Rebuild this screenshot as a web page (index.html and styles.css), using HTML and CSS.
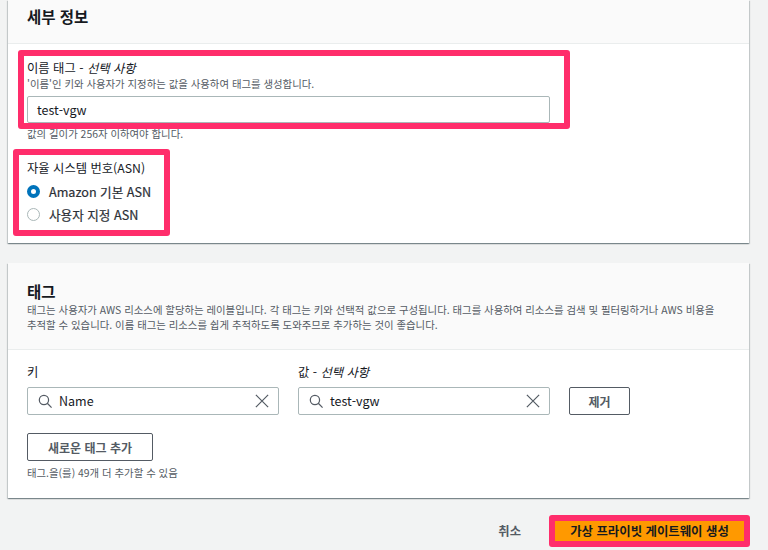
FILE: index.html
```html
<!DOCTYPE html>
<html lang="ko">
<head>
<meta charset="utf-8">
<title>가상 프라이빗 게이트웨이 생성</title>
<link rel="stylesheet" href="styles.css">
</head>
<body>
<main class="page">
  <section class="card first">
    <header class="card-head first-head"><h2 class="title">세부 정보</h2></header>
    <div class="card-body details">
      <div class="mark mark-name"></div>
      <div class="mark mark-asn"></div>
      <div class="field-label">이름 태그 - <i>선택 사항</i></div>
      <div class="hint">'이름'인 키와 사용자가 지정하는 값을 사용하여 태그를 생성합니다.</div>
      <div class="input name-input">test-vgw</div>
      <div class="hint after">값의 길이가 256자 이하여야 합니다.</div>
      <div class="field-label asn-label">자율 시스템 번호(ASN)</div>
      <div class="radio-row"><span class="radio on"></span>Amazon 기본 ASN</div>
      <div class="radio-row"><span class="radio"></span>사용자 지정 ASN</div>
    </div>
  </section>
  <section class="card second">
    <header class="card-head tag-head">
      <h2 class="title">태그</h2>
      <p class="desc">태그는 사용자가 AWS 리소스에 할당하는 레이블입니다. 각 태그는 키와 선택적 값으로 구성됩니다. 태그를 사용하여 리소스를 검색 및 필터링하거나 AWS 비용을 추적할 수 있습니다. 이름 태그는 리소스를 쉽게 추적하도록 도와주므로 추가하는 것이 좋습니다.</p>
    </header>
    <div class="card-body tags">
      <div class="tag-row">
        <div class="tag-col">
          <div class="field-label">키</div>
          <div class="input search">
            <svg class="ico" viewBox="0 0 16 16"><circle cx="6.8" cy="6.8" r="5.3"/><path d="M10.6 10.6 15.5 15.5"/></svg>
            <span class="grow">Name</span>
            <svg class="ico x" viewBox="0 0 16 16"><path d="M1 1l14 14M15 1 1 15"/></svg>
          </div>
        </div>
        <div class="tag-col">
          <div class="field-label">값 - <i>선택 사항</i></div>
          <div class="input search">
            <svg class="ico" viewBox="0 0 16 16"><circle cx="6.8" cy="6.8" r="5.3"/><path d="M10.6 10.6 15.5 15.5"/></svg>
            <span class="grow">test-vgw</span>
            <svg class="ico x" viewBox="0 0 16 16"><path d="M1 1l14 14M15 1 1 15"/></svg>
          </div>
        </div>
        <button class="btn remove">제거</button>
      </div>
      <button class="btn add">새로운 태그 추가</button>
      <div class="hint limit">태그.을(를) 49개 더 추가할 수 있음</div>
    </div>
  </section>
  <footer class="actions">
    <span class="cancel">취소</span>
    <button class="primary">가상 프라이빗 게이트웨이 생성</button>
  </footer>
</main>
</body>
</html>
```
FILE: styles.css
```css
* { box-sizing: border-box; }
html, body { margin: 0; height: 100%; }
body {
  background: #f2f3f3;
  color: #16191f;
  font-family: "Noto Sans CJK KR", "Noto Sans", sans-serif;
  font-size: 12.5px;
  overflow: hidden;
}
.page { width: 768px; height: 550px; padding: 0 19px 0 8px; position: relative; }
.card {
  background: #fff;
  box-shadow: 0 1px 1px 0 rgba(0,28,36,.3), 1px 1px 1px 0 rgba(0,28,36,.15), -1px 1px 1px 0 rgba(0,28,36,.15);
}
.card-head { background: #fafafa; border-bottom: 1px solid #eaeded; }
.first { height: 243px; }
.first-head { height: 44px; padding-top: 4px; }
.second { height: 235px; margin-top: 20px; }
.tag-head { height: 87px; padding: 16px 19px 0; }
.title { margin: 0; font-size: 15.5px; font-weight: 700; line-height: 24px; }
.first-head .title { padding-left: 19px; }
.desc { margin: -1px 0 0; width: 695px; font-size: 10.4px; line-height: 15px; color: #545b64; }
.card-body { padding: 0 19px; position: relative; }
.details { padding-top: 15px; }
.field-label { font-size: 12.3px; line-height: 18px; }
.field-label i { font-style: italic; }
.hint { font-size: 10.4px; line-height: 15px; color: #545b64; margin-top: -1px; }
.hint.after { margin-top: 3px; }
.input {
  height: 27px;
  border: 1px solid #aab7b8;
  border-radius: 2px;
  background: #fff;
  font-size: 12.5px;
  line-height: 25px;
  padding-left: 9px;
}
.name-input { width: 523px; margin-top: 5px; }
.asn-label { margin-top: 18px; }
.radio-row { display: flex; align-items: center; gap: 9px; height: 23px; font-size: 12.6px; font-weight: 400; color: #2b2f36; -webkit-text-stroke: 0.2px #2b2f36; }
.radio { width: 13px; height: 13px; border-radius: 50%; border: 1px solid #aab7b8; background: #fff; }
.radio.on { border: 4px solid #0073bb; }
.asn-label + .radio-row { margin-top: 3px; }
.tags { padding-top: 13px; }
.tag-row { display: flex; align-items: flex-end; gap: 19px; }
.tag-col { width: 252px; display: flex; flex-direction: column; gap: 6px; }
.search { display: flex; align-items: center; padding: 0 9px 0 10px; gap: 7px; height: 28px; line-height: 28px; }
.grow { flex: 1; }
.ico { width: 14px; height: 14px; fill: none; stroke: #545b64; stroke-width: 1.4; flex: none; }
.btn {
  display: block;
  height: 28px;
  background: #fff;
  border: 1px solid #545b64;
  border-radius: 2px;
  color: #545b64;
  font: 700 12px "Noto Sans CJK KR", sans-serif;
  padding: 0;
}
.remove { width: 61px; }
.add { width: 126px; margin-top: 18px; }
.limit { margin-top: 4px; }
.actions { display: flex; justify-content: flex-end; align-items: center; margin-top: 17px; gap: 28px; margin-right: -1px; }
.cancel { font-size: 12.3px; font-weight: 700; color: #545b64; }
.primary {
  width: 201px;
  height: 32px;
  background: #ff9900;
  border: 6px solid #ff2d6b;
  border-radius: 3px;
  color: #16191f;
  font: 700 12.4px "Noto Sans CJK KR", sans-serif;
  padding: 0;
}
.mark { position: absolute; border: 6px solid #ff2d6b; border-radius: 3px; pointer-events: none; }
.mark-name { left: 10px; top: 6px; width: 552px; height: 79px; }
.mark-asn { left: 5px; top: 105px; width: 157px; height: 87px; }
```
